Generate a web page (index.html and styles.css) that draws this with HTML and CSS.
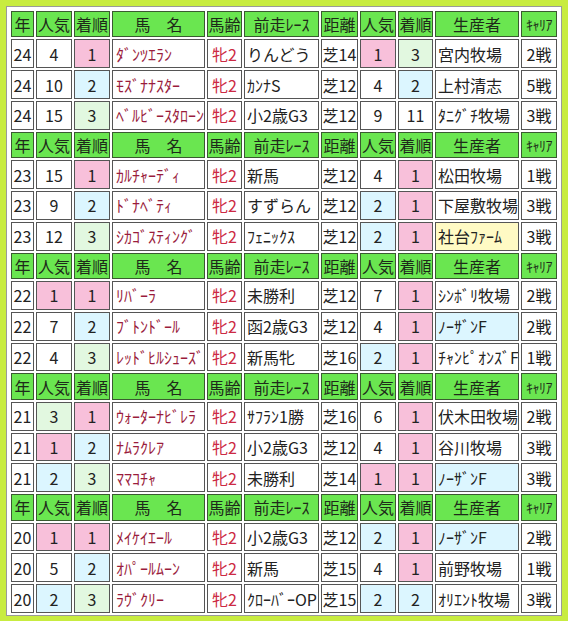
FILE: index.html
```html
<!DOCTYPE html>
<html lang="ja">
<head>
<meta charset="utf-8">
<title>成績表</title>
<link rel="stylesheet" href="styles.css">
</head>
<body>
<div class="frame">
<div class="inner">
<table class="tbl">
<colgroup>
<col class="c-yr"><col class="c-pop"><col class="c-rank"><col class="c-name"><col class="c-age"><col class="c-race"><col class="c-dist"><col class="c-pop"><col class="c-rank2"><col class="c-breeder"><col class="c-car">
</colgroup>
<tbody>
<tr class="head"><th>年</th><th>人気</th><th>着順</th><th>馬　名</th><th>馬齢</th><th>前走ﾚｰｽ</th><th>距離</th><th>人気</th><th>着順</th><th>生産者</th><th class="sm">ｷｬﾘｱ</th></tr>
<tr class="data"><td>24</td><td>4</td><td class="p">1</td><td class="nm">ﾀﾞﾝﾂｴﾗﾝ</td><td class="age">牝2</td><td class="l">りんどう</td><td>芝14</td><td class="p">1</td><td class="g">3</td><td class="l">宮内牧場</td><td>2戦</td></tr>
<tr class="data"><td>24</td><td>10</td><td class="b">2</td><td class="nm">ﾓｽﾞﾅﾅｽﾀｰ</td><td class="age">牝2</td><td class="l">ｶﾝﾅS</td><td>芝12</td><td>4</td><td class="b">2</td><td class="l">上村清志</td><td>5戦</td></tr>
<tr class="data"><td>24</td><td>15</td><td class="g">3</td><td class="nm">ﾍﾞﾙﾋﾞｰｽﾀﾛｰﾝ</td><td class="age">牝2</td><td class="l">小2歳G3</td><td>芝12</td><td>9</td><td>11</td><td class="l">ﾀﾆｸﾞﾁ牧場</td><td>3戦</td></tr>
<tr class="head"><th>年</th><th>人気</th><th>着順</th><th>馬　名</th><th>馬齢</th><th>前走ﾚｰｽ</th><th>距離</th><th>人気</th><th>着順</th><th>生産者</th><th class="sm">ｷｬﾘｱ</th></tr>
<tr class="data"><td>23</td><td>15</td><td class="p">1</td><td class="nm">ｶﾙﾁｬｰﾃﾞｨ</td><td class="age">牝2</td><td class="l">新馬</td><td>芝12</td><td>4</td><td class="p">1</td><td class="l">松田牧場</td><td>1戦</td></tr>
<tr class="data"><td>23</td><td>9</td><td class="b">2</td><td class="nm">ﾄﾞﾅﾍﾞﾃｨ</td><td class="age">牝2</td><td class="l">すずらん</td><td>芝12</td><td class="b">2</td><td class="p">1</td><td class="l">下屋敷牧場</td><td>3戦</td></tr>
<tr class="data"><td>23</td><td>12</td><td class="g">3</td><td class="nm">ｼｶｺﾞｽﾃｨﾝｸﾞ</td><td class="age">牝2</td><td class="l">ﾌｪﾆｯｸｽ</td><td>芝12</td><td class="b">2</td><td class="p">1</td><td class="l y">社台ﾌｧｰﾑ</td><td>3戦</td></tr>
<tr class="head"><th>年</th><th>人気</th><th>着順</th><th>馬　名</th><th>馬齢</th><th>前走ﾚｰｽ</th><th>距離</th><th>人気</th><th>着順</th><th>生産者</th><th class="sm">ｷｬﾘｱ</th></tr>
<tr class="data"><td>22</td><td class="p">1</td><td class="p">1</td><td class="nm">ﾘﾊﾞｰﾗ</td><td class="age">牝2</td><td class="l">未勝利</td><td>芝12</td><td>7</td><td class="p">1</td><td class="l">ｼﾝﾎﾞﾘ牧場</td><td>2戦</td></tr>
<tr class="data"><td>22</td><td>7</td><td class="b">2</td><td class="nm">ﾌﾞﾄﾝﾄﾞｰﾙ</td><td class="age">牝2</td><td class="l">函2歳G3</td><td>芝12</td><td>4</td><td class="p">1</td><td class="l b">ﾉｰｻﾞﾝF</td><td>2戦</td></tr>
<tr class="data"><td>22</td><td>4</td><td class="g">3</td><td class="nm">ﾚｯﾄﾞﾋﾙｼｭｰｽﾞ</td><td class="age">牝2</td><td class="l">新馬牝</td><td>芝16</td><td class="b">2</td><td class="p">1</td><td class="l">ﾁｬﾝﾋﾟｵﾝｽﾞF</td><td>1戦</td></tr>
<tr class="head"><th>年</th><th>人気</th><th>着順</th><th>馬　名</th><th>馬齢</th><th>前走ﾚｰｽ</th><th>距離</th><th>人気</th><th>着順</th><th>生産者</th><th class="sm">ｷｬﾘｱ</th></tr>
<tr class="data"><td>21</td><td class="g">3</td><td class="p">1</td><td class="nm">ｳｫｰﾀｰﾅﾋﾞﾚﾗ</td><td class="age">牝2</td><td class="l">ｻﾌﾗﾝ1勝</td><td>芝16</td><td>6</td><td class="p">1</td><td class="l">伏木田牧場</td><td>2戦</td></tr>
<tr class="data"><td>21</td><td class="p">1</td><td class="b">2</td><td class="nm">ﾅﾑﾗｸﾚｱ</td><td class="age">牝2</td><td class="l">小2歳G3</td><td>芝12</td><td>4</td><td class="p">1</td><td class="l">谷川牧場</td><td>3戦</td></tr>
<tr class="data"><td>21</td><td class="b">2</td><td class="g">3</td><td class="nm">ﾏﾏｺﾁｬ</td><td class="age">牝2</td><td class="l">未勝利</td><td>芝14</td><td class="p">1</td><td class="p">1</td><td class="l b">ﾉｰｻﾞﾝF</td><td>3戦</td></tr>
<tr class="head"><th>年</th><th>人気</th><th>着順</th><th>馬　名</th><th>馬齢</th><th>前走ﾚｰｽ</th><th>距離</th><th>人気</th><th>着順</th><th>生産者</th><th class="sm">ｷｬﾘｱ</th></tr>
<tr class="data"><td>20</td><td class="p">1</td><td class="p">1</td><td class="nm">ﾒｲｹｲｴｰﾙ</td><td class="age">牝2</td><td class="l">小2歳G3</td><td>芝12</td><td class="b">2</td><td class="p">1</td><td class="l b">ﾉｰｻﾞﾝF</td><td>2戦</td></tr>
<tr class="data"><td>20</td><td>5</td><td class="b">2</td><td class="nm">ｵﾊﾟｰﾙﾑｰﾝ</td><td class="age">牝2</td><td class="l">新馬</td><td>芝15</td><td>4</td><td class="p">1</td><td class="l">前野牧場</td><td>1戦</td></tr>
<tr class="data"><td>20</td><td class="b">2</td><td class="g">3</td><td class="nm">ﾗｳﾞｸﾘｰ</td><td class="age">牝2</td><td class="l">ｸﾛｰﾊﾞｰOP</td><td>芝15</td><td class="b">2</td><td class="b">2</td><td class="l">ｵﾘｴﾝﾄ牧場</td><td>3戦</td></tr>
</tbody>
</table>
</div>
</div>
</body>
</html>
```
FILE: styles.css
```css
html, body {
  margin: 0;
  padding: 0;
  background: #c8ec40;
}
body {
  width: 568px;
  height: 621px;
  overflow: hidden;
  font-family: "Noto Sans CJK JP", "Noto Sans", sans-serif;
  color: #222;
}
.frame {
  box-sizing: border-box;
  width: 568px;
  height: 621px;
  border-style: solid;
  border-color: #c8ec40;
  border-width: 6px 6px 5px 6px;
  background: #c8ec40;
}
.inner {
  box-sizing: border-box;
  height: 100%;
  border: 1px solid #9a9a9a;
  background: #fff;
  padding: 2px;
}
.tbl {
  table-layout: fixed;
  width: 550px;
  border-collapse: separate;
  border-spacing: 2px;
  font-size: 16px;
  line-height: 1;
}
.c-yr { width: 23px; }
.c-pop { width: 36px; }
.c-rank { width: 36px; }
.c-name { width: 93px; }
.c-age { width: 35px; }
.c-race { width: 75px; }
.c-dist { width: 37px; }
.c-rank2 { width: 35px; }
.c-breeder { width: 84px; }
.c-car { width: 36px; }
.tbl th, .tbl td {
  box-sizing: border-box;
  border: 1px solid #555;
  padding: 0;
  text-align: center;
  vertical-align: middle;
  white-space: nowrap;
  overflow: hidden;
}
.tbl th {
  background: #6ae650;
  font-weight: normal;
  color: #1e2a1a;
  border-color: #3a5a30;
}
.tbl th.sm {
  font-size: 14px;
  letter-spacing: -0.5px;
}
.head { height: 26.4px; }
.data { height: 28.8px; }
.tbl td.l {
  text-align: left;
  padding-left: 2px;
}
.tbl td.nm {
  text-align: left;
  padding-left: 3px;
  font-size: 16px;
  color: #9a1c3c;
}
.tbl td.age {
  color: #cc2a44;
}
.tbl td.p { background: #f8c0da; }
.tbl td.b { background: #dcf6ff; }
.tbl td.g { background: #e2f8e0; }
.tbl td.y { background: #fffac4; }
```
